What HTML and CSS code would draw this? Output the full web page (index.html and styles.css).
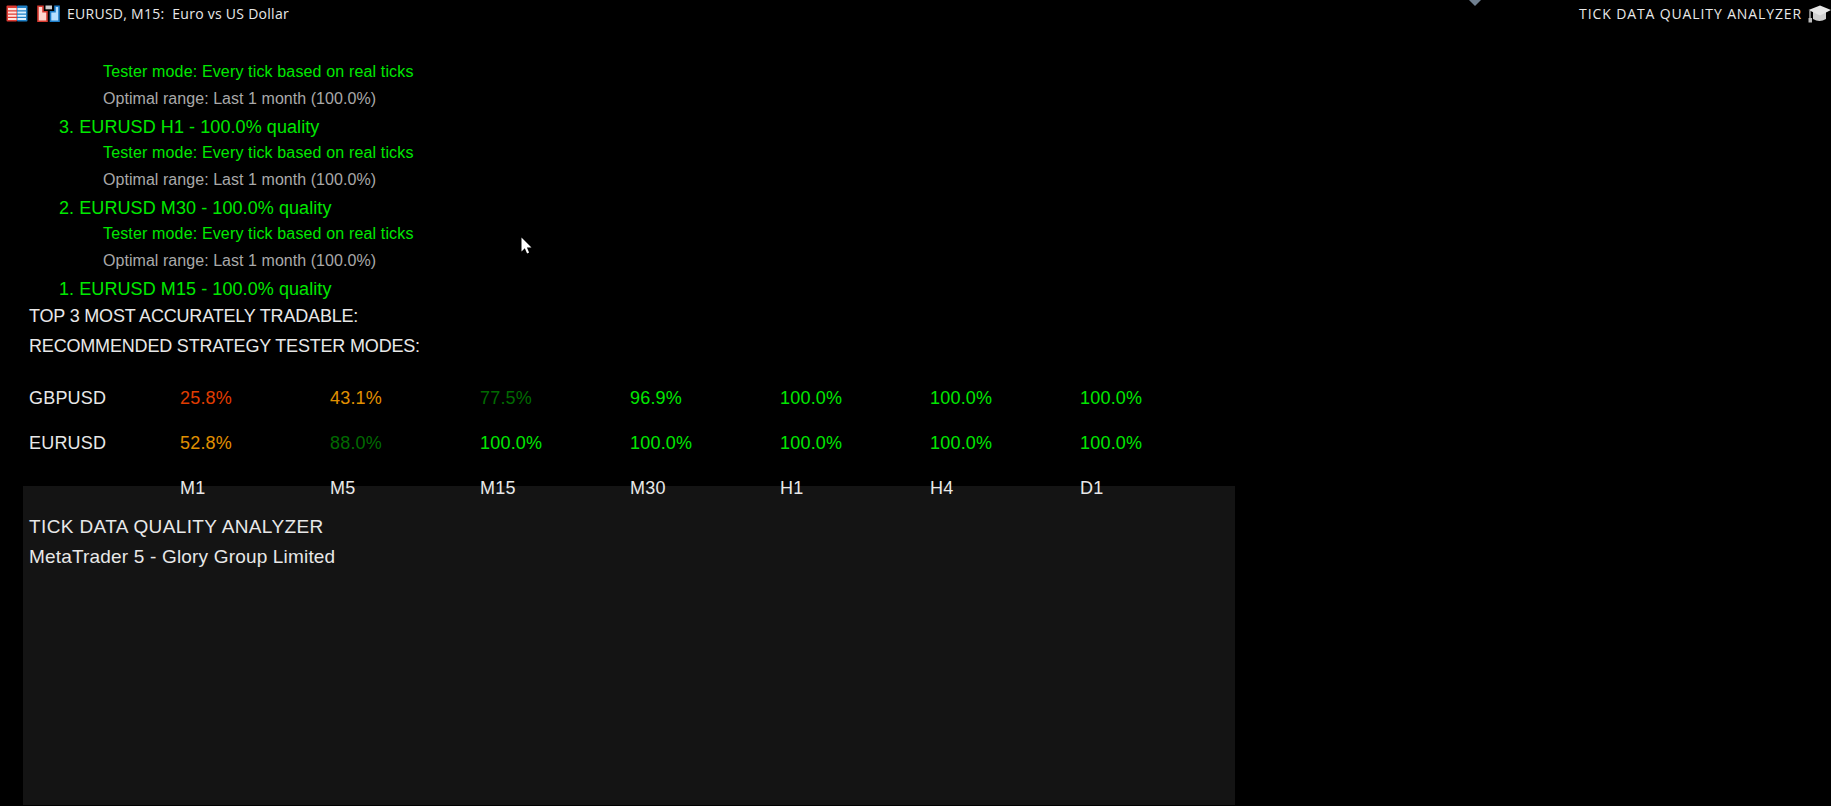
FILE: index.html
```
<!DOCTYPE html>
<html lang="en">
<head>
    <meta charset="UTF-8">
    <meta name="viewport" content="width=device-width, initial-scale=1.0">
    <title>EURUSD, M15</title>
    <link rel="stylesheet" href="styles.css">
</head>
<body>
    <div class="chart">
        <div class="titlebar">
            <svg class="icon-depth" width="24" height="18" viewBox="0 0 24 18">
                <rect x="0.5" y="0.5" width="10.500" height="16" rx="1" fill="#dc3b33"/>
                <rect x="11" y="0.5" width="10.500" height="16" rx="1" fill="#1e7fc4"/>
                <path d="M2 3h8.500v2.200h-8.500zM2 6.500h8.500v2h-8.500zM2 9.700h8.500v2h-8.500zM2 13h8.500v2h-8.500z" fill="#ffe3de"/>
                <path d="M11.500 3h8.500v2.200h-8.500zM11.500 6.500h8.500v2h-8.500zM11.500 9.700h8.500v2h-8.500zM11.500 13h8.500v2h-8.500z" fill="#d8efff"/>
            </svg>
            <svg class="icon-trade" width="24" height="18" viewBox="0 0 24 18">
                <path d="M1 1.300h5v5.500h4v9.400H1z" fill="#ffd6cf" stroke="#d83a30" stroke-width="1.600"/>
                <path d="M22 1.300h-4v5.500h-4.500v9.400H22z" fill="#b9e0ff" stroke="#1c7cc8" stroke-width="1.600"/>
                <rect x="7" y="-1" width="9.500" height="6.500" fill="#000"/>
                <rect x="8.500" y="0.500" width="6.500" height="3.800" fill="#ccc"/>
            </svg>
            <span class="symbol">EURUSD, M15:&nbsp; Euro vs US Dollar</span>
            <span class="expert">TICK DATA QUALITY ANALYZER</span>
            <svg class="icon-expert" width="23" height="18" viewBox="0 0 23 18">
                <path d="M5 7v7q6.500 4 13 0V7z" fill="#d0d0d0"/>
                <path d="M0.500 5L12 0.500l11 4.500-11 5.500z" fill="#e6e6e6"/>
                <path d="M2 6v7" stroke="#aaa" stroke-width="1.500"/>
                <rect x="0.500" y="13" width="3.500" height="4.500" fill="#bbb"/>
            </svg>
            <svg class="shift-mark" width="12" height="6" viewBox="0 0 12 6">
                <path d="M0 0h12L6 6z" fill="#708090"/>
            </svg>
        </div>

        <div class="modes">
            <div class="mode green">Tester mode: Every tick based on real ticks</div>
            <div class="mode range">Optimal range: Last 1 month (100.0%)</div>
            <div class="rank">3. EURUSD H1 - 100.0% quality</div>
            <div class="mode green">Tester mode: Every tick based on real ticks</div>
            <div class="mode range">Optimal range: Last 1 month (100.0%)</div>
            <div class="rank">2. EURUSD M30 - 100.0% quality</div>
            <div class="mode green">Tester mode: Every tick based on real ticks</div>
            <div class="mode range">Optimal range: Last 1 month (100.0%)</div>
            <div class="rank">1. EURUSD M15 - 100.0% quality</div>
        </div>
        <div class="heading">TOP 3 MOST ACCURATELY TRADABLE:</div>
        <div class="heading">RECOMMENDED STRATEGY TESTER MODES:</div>

        <div class="quality">
            <span>GBPUSD</span>
            <span class="bad">25.8%</span>
            <span class="fair">43.1%</span>
            <span class="good">77.5%</span>
            <span class="best">96.9%</span>
            <span class="best">100.0%</span>
            <span class="best">100.0%</span>
            <span class="best">100.0%</span>

            <span>EURUSD</span>
            <span class="fair">52.8%</span>
            <span class="good">88.0%</span>
            <span class="best">100.0%</span>
            <span class="best">100.0%</span>
            <span class="best">100.0%</span>
            <span class="best">100.0%</span>
            <span class="best">100.0%</span>

            <span></span>
            <span>M1</span>
            <span>M5</span>
            <span>M15</span>
            <span>M30</span>
            <span>H1</span>
            <span>H4</span>
            <span>D1</span>
        </div>

        <div class="panel">
            <div class="panel-title">TICK DATA QUALITY ANALYZER</div>
            <div class="panel-broker">MetaTrader 5 - Glory Group Limited</div>
        </div>

        <svg class="cursor" width="12" height="18" viewBox="0 0 12 18">
            <path d="M0.500 0.500v14l3.300-3.200 2.300 5.200 2-1-2.200-5h4.600z" fill="#fff"/>
        </svg>
    </div>
</body>
</html>
```
FILE: styles.css
```
body {
    margin: 0;
    background-color: #000;
    color: #e8e8e8;
    font-family: "Liberation Sans", Arial, sans-serif;
    overflow: hidden;
}

.chart {
    position: relative;
    display: flex;
    flex-direction: column;
    height: 806px;
    white-space: nowrap;
}

.titlebar {
    display: flex;
    align-items: flex-start;
    height: 58px;
    flex: none;
    font-family: "Open Sans", "Noto Sans", sans-serif;
    font-size: 14px;
    line-height: 28px;
}

.icon-depth {
    margin: 5px 0 0 6px;
}

.icon-trade {
    margin: 5px 0 0 7px;
}

.symbol {
    margin-left: 6px;
    letter-spacing: 0.27px;
}

.expert {
    margin-left: auto;
    letter-spacing: 0.88px;
}

.icon-expert {
    margin: 5px 0 0 6px;
}

.shift-mark {
    position: absolute;
    left: 1469px;
    top: 0;
}

.modes {
    display: flex;
    flex-direction: column;
}

.mode,
.rank {
    height: 27px;
    line-height: 28px;
}

.mode {
    padding-left: 103px;
    font-size: 16px;
}

.green {
    letter-spacing: 0.15px;
}

.range {
    letter-spacing: 0.05px;
}

.rank {
    padding-left: 59px;
    font-size: 18px;
    line-height: 30px;
    letter-spacing: 0.08px;
}

.green,
.rank,
.best {
    color: #00e800;
}

.range {
    color: #a9a9a9;
}

.heading {
    padding-left: 29px;
    height: 30px;
    line-height: 31px;
    font-size: 18px;
    letter-spacing: -0.18px;
}

.quality {
    display: grid;
    grid-template-columns: 151px repeat(7, 150px);
    grid-auto-rows: 45px;
    margin: 15px 0 0 29px;
    line-height: 45px;
    font-size: 18px;
    letter-spacing: 0.2px;
    position: relative;
    z-index: 1;
}

.bad {
    color: #e03c00;
}

.fair {
    color: #e09000;
}

.good {
    color: #006a00;
}

.panel {
    box-sizing: border-box;
    width: 1212px;
    margin: -25px 0 1px 23px;
    padding: 26px 6px 0;
    flex: 1;
    background-color: #141414;
    font-size: 19px;
    line-height: 30px;
}

.panel-title {
    letter-spacing: 0.38px;
}

.panel-broker {
    letter-spacing: 0.18px;
}

.cursor {
    position: absolute;
    left: 521px;
    top: 237px;
}
```
